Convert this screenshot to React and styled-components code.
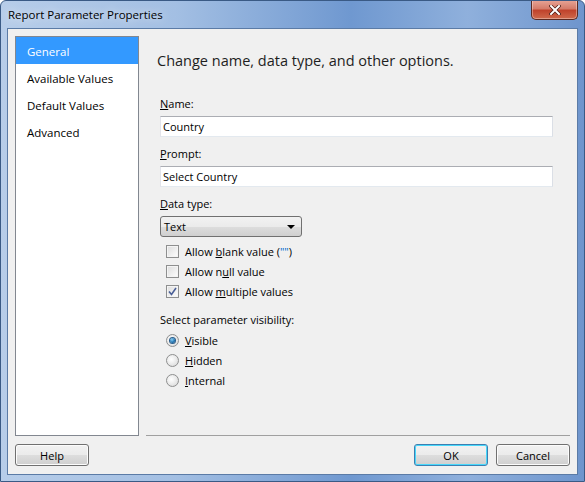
import React, { useState } from 'react'
import styled, { createGlobalStyle } from 'styled-components'

const GlobalStyle = createGlobalStyle`
  html, body { margin: 0; padding: 0; }
  body {
    font-family: "Open Sans", "Noto Sans", sans-serif;
    font-size: 11px;
    color: #000;
    background: #fff;
  }
`

const Window = styled.div`
  width: 585px;
  height: 482px;
  box-sizing: border-box;
  display: flex;
  flex-direction: column;
  border: 1px solid #3a5a85;
  border-radius: 6px 6px 0 0;
  background: linear-gradient(90deg, #b7cde9 0%, #a3bfe3 30%, #6f98d0 60%, #8fb0dc 80%, #6e95cd 100%);
  overflow: hidden;
`

const TitleBar = styled.div`
  height: 27px;
  display: flex;
  align-items: flex-start;
  justify-content: space-between;
  padding-left: 7px;
`

const Title = styled.div`
  font-size: 11.5px;
  color: #000;
  line-height: 27px;
  text-shadow: 0 0 8px rgba(255, 255, 255, 0.9);
`

const CloseButton = styled.div`
  width: 45px;
  height: 19px;
  margin-right: 6px;
  margin-top: -1px;
  border: 1px solid #5b2a22;
  border-top: none;
  border-radius: 0 0 5px 5px;
  background: linear-gradient(180deg, #e8a698 0%, #d57c6a 45%, #c0432c 55%, #cf6a4c 100%);
  display: flex;
  align-items: center;
  justify-content: center;
  box-shadow: inset 0 0 0 1px rgba(255, 255, 255, 0.35);
`

const Client = styled.div`
  flex: 1;
  margin: 0 6px 6px 6px;
  background: #f0f0f0;
  border: 1px solid #5b7ba6;
  display: flex;
  flex-direction: column;
  padding: 7px 7px 8px 7px;
`

const Main = styled.div`
  display: flex;
  gap: 7px;
  height: 400px;
`

const Nav = styled.div`
  width: 122px;
  background: #fff;
  border: 1px solid #828790;
  display: flex;
  flex-direction: column;
`

const NavItem = styled.div`
  height: 24px;
  line-height: 24px;
  padding-top: 3px;
  padding-left: 11px;
  font-size: 11.5px;
  color: ${p => (p.$active ? '#fff' : '#000')};
  background: ${p => (p.$active ? '#3399ff' : 'transparent')};
`

const Content = styled.div`
  flex: 1;
  display: flex;
  flex-direction: column;
  border-bottom: 1px solid #a0a0a0;
  padding: 0 17px 0 11px;
`

const Heading = styled.div`
  font-size: 14.5px;
  color: #1e1e1e;
  margin-top: 14px;
  margin-bottom: 24px;
  height: 22px;
  line-height: 22px;
`

const Form = styled.div`
  padding-left: 3px;
  display: flex;
  flex-direction: column;
`

const Label = styled.div`
  font-size: 11px;
  height: 15px;
  line-height: 15px;
  margin-bottom: 5px;
`

const U = styled.span`
  text-decoration: underline;
`

const TextInput = styled.input`
  box-sizing: border-box;
  height: 21px;
  width: 100%;
  border: 1px solid #abadb3;
  border-bottom-color: #e3e9ef;
  border-right-color: #dbdfe6;
  border-left-color: #e2e3ea;
  padding: 0 2px;
  font-family: inherit;
  font-size: 11px;
  color: #000;
  background: #fff;
  outline: none;
  margin-bottom: 9px;
`

const Select = styled.div`
  box-sizing: border-box;
  width: 142px;
  height: 21px;
  border: 1px solid #707070;
  border-radius: 3px;
  background: linear-gradient(180deg, #f2f2f2 0%, #ebebeb 50%, #dddddd 51%, #cfcfcf 100%);
  display: flex;
  align-items: center;
  justify-content: space-between;
  padding: 0 6px 0 3px;
  margin-bottom: 4px;
  font-size: 11px;
`

const Arrow = styled.div`
  width: 0;
  height: 0;
  border-left: 4px solid transparent;
  border-right: 4px solid transparent;
  border-top: 4px solid #000;
`

const OptionRow = styled.label`
  display: flex;
  align-items: center;
  gap: 6px;
  height: 20px;
  padding-left: 6px;
  font-size: 11px;
`

const Box = styled.span`
  box-sizing: border-box;
  width: 13px;
  height: 13px;
  border: 1px solid #8e8f8f;
  background: linear-gradient(135deg, #dcdcdc 0%, #f4f4f4 70%, #ffffff 100%);
  box-shadow: inset 0 0 0 1px #f4f4f4;
  display: flex;
  align-items: center;
  justify-content: center;
`

const Radio = styled.span`
  box-sizing: border-box;
  width: 13px;
  height: 13px;
  border-radius: 50%;
  border: 1px solid #8e8f8f;
  background: radial-gradient(circle at 40% 40%, #ffffff 0%, #e6e6e6 60%, #cfcfcf 100%);
  display: flex;
  align-items: center;
  justify-content: center;
`

const Dot = styled.span`
  width: 5px;
  height: 5px;
  border-radius: 50%;
  background: radial-gradient(circle at 40% 35%, #8ad0f5 0%, #1c6fae 60%, #0a4170 100%);
  box-shadow: 0 0 0 1px #2a5d8a;
`

const Quote = styled.span`
  color: #0066cc;
`

const SectionLabel = styled(Label)`
  margin-top: 11px;
  margin-bottom: 3px;
`

const Footer = styled.div`
  display: flex;
  align-items: center;
  justify-content: space-between;
  margin-top: 8px;
`

const Buttons = styled.div`
  display: flex;
  gap: 8px;
`

const Button = styled.button`
  box-sizing: border-box;
  width: 74px;
  height: 22px;
  border: 1px solid ${p => (p.$default ? '#3c7fb1' : '#707070')};
  border-radius: 3px;
  background: linear-gradient(180deg, #f2f2f2 0%, #ebebeb 50%, #dddddd 51%, #cfcfcf 100%);
  font-family: inherit;
  font-size: 11px;
  color: #000;
  padding: 0;
  box-shadow: ${p => (p.$default ? 'inset 0 0 0 1px #48d8fb' : 'inset 0 0 0 1px #fcfcfc')};
`

function CheckOption({ checked, children }) {
  return (
    <OptionRow>
      <Box>
        {checked && (
          <svg width="9" height="9" viewBox="0 0 9 9">
            <path d="M1 4.5 L3.5 7.5 L8 1" fill="none" stroke="#4a5f97" strokeWidth="1.6" />
          </svg>
        )}
      </Box>
      <span>{children}</span>
    </OptionRow>
  )
}

function RadioOption({ checked, children }) {
  return (
    <OptionRow>
      <Radio>{checked && <Dot />}</Radio>
      <span>{children}</span>
    </OptionRow>
  )
}

function App() {
  const [name, setName] = useState('Country')
  const [prompt, setPrompt] = useState('Select Country')
  const pages = ['General', 'Available Values', 'Default Values', 'Advanced']

  return (
    <>
      <GlobalStyle />
      <Window>
        <TitleBar>
          <Title>Report Parameter Properties</Title>
          <CloseButton>
            <svg width="12" height="10" viewBox="0 0 12 10">
              <path d="M2 1 L10 9 M10 1 L2 9" stroke="#4a1a12" strokeWidth="3.4" strokeLinecap="square" />
              <path d="M2 1 L10 9 M10 1 L2 9" stroke="#fff" strokeWidth="2" strokeLinecap="square" />
            </svg>
          </CloseButton>
        </TitleBar>
        <Client>
          <Main>
            <Nav>
              {pages.map((p, i) => (
                <NavItem key={p} $active={i === 0}>{p}</NavItem>
              ))}
            </Nav>
            <Content>
              <Heading>Change name, data type, and other options.</Heading>
              <Form>
                <Label><U>N</U>ame:</Label>
                <TextInput value={name} onChange={e => setName(e.currentTarget.value)} />
                <Label><U>P</U>rompt:</Label>
                <TextInput value={prompt} onChange={e => setPrompt(e.currentTarget.value)} />
                <Label><U>D</U>ata type:</Label>
                <Select>
                  <span>Text</span>
                  <Arrow />
                </Select>
                <CheckOption>Allow <U>b</U>lank value (<Quote>""</Quote>)</CheckOption>
                <CheckOption>Allow n<U>u</U>ll value</CheckOption>
                <CheckOption checked>Allow <U>m</U>ultiple values</CheckOption>
                <SectionLabel>Select parameter visibility:</SectionLabel>
                <RadioOption checked><U>V</U>isible</RadioOption>
                <RadioOption><U>H</U>idden</RadioOption>
                <RadioOption><U>I</U>nternal</RadioOption>
              </Form>
            </Content>
          </Main>
          <Footer>
            <Button>Help</Button>
            <Buttons>
              <Button $default>OK</Button>
              <Button>Cancel</Button>
            </Buttons>
          </Footer>
        </Client>
      </Window>
    </>
  )
}

export default App
